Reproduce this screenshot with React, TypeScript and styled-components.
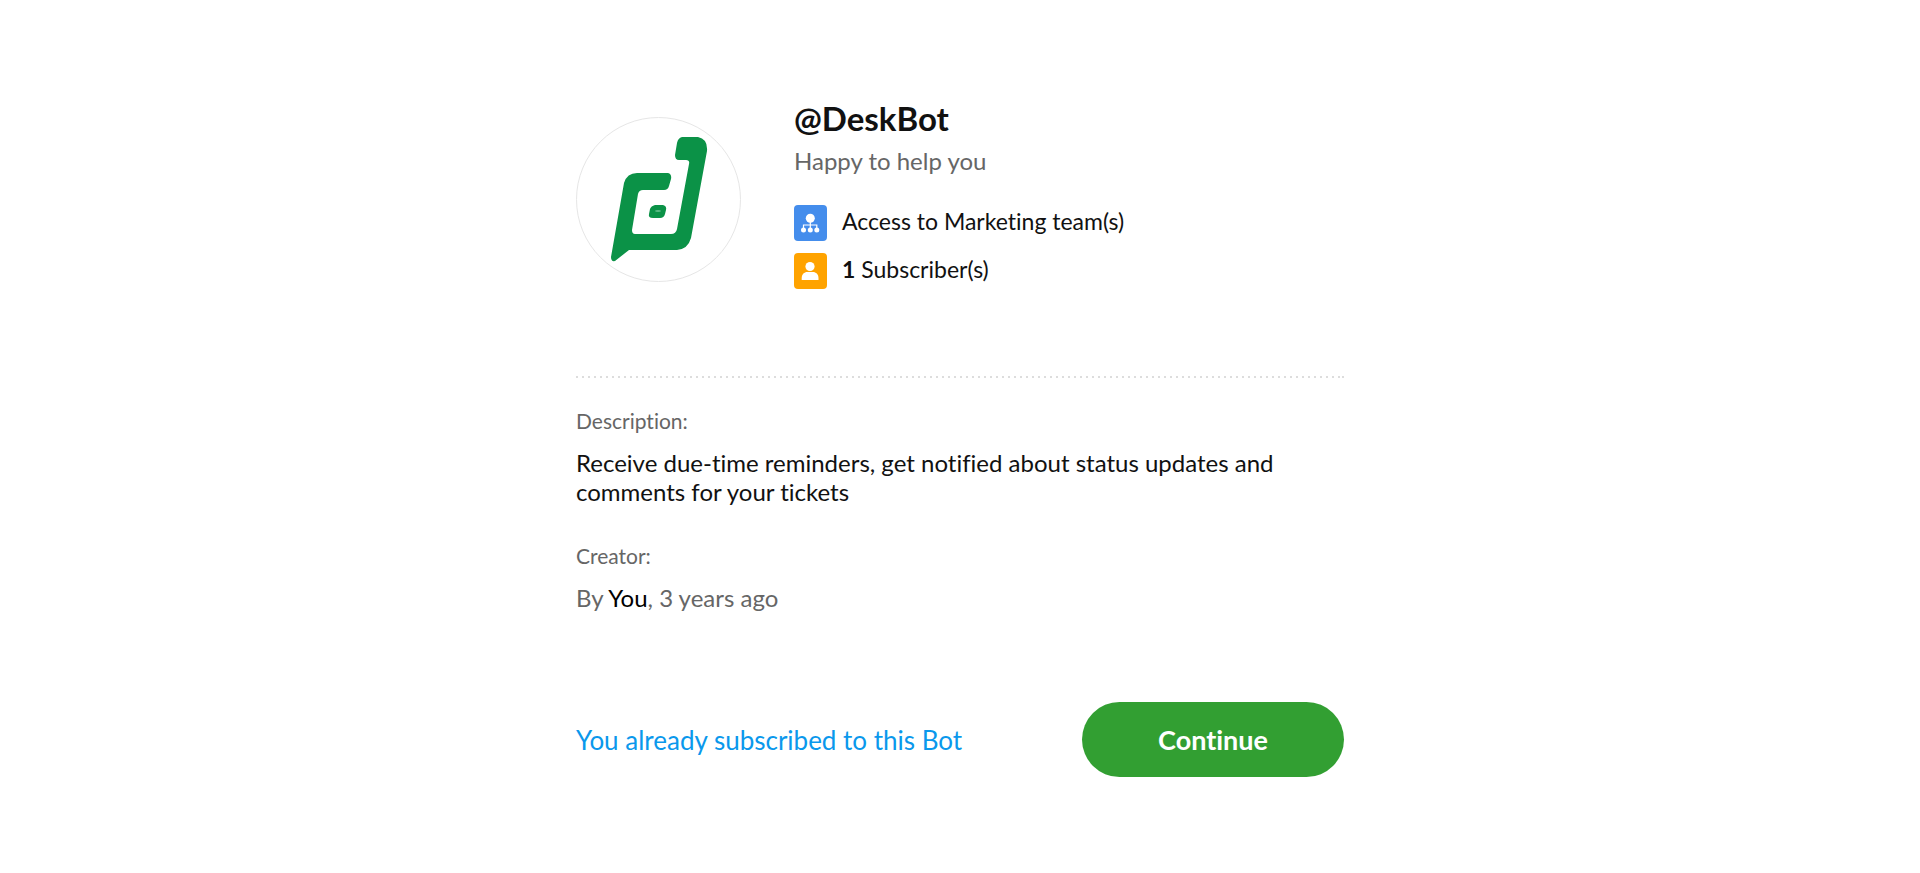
import React from "react";
import styled, { createGlobalStyle } from "styled-components";

const GlobalStyle = createGlobalStyle`
  *, *::before, *::after { box-sizing: border-box; }
  body {
    margin: 0;
    background: #fff;
    color: #111;
    font-family: Lato, "Liberation Sans", sans-serif;
    font-size: 24px;
    line-height: 29px;
    font-variant-ligatures: no-common-ligatures;
  }
  h1, h2, p, ul { margin: 0; padding: 0; }
`;

const Page = styled.main`
  display: flex;
  justify-content: center;
  padding: 99px 24px 96px;
`;

const Card = styled.article`
  width: 100%;
  max-width: 768px;
`;

const Header = styled.header`
  display: flex;
  align-items: center;
  gap: 53px;
  padding-bottom: 87px;
`;

const Avatar = styled.div`
  flex: none;
  width: 165px;
  height: 165px;
  margin-top: 10px;
  border: 1px solid #e6e6e6;
  border-radius: 50%;
  overflow: hidden;

  svg { display: block; width: 100%; height: 100%; }
`;

const Name = styled.h1`
  font-size: 33px;
  line-height: 38px;
  font-weight: 700;
`;

const Tagline = styled.p`
  margin-top: 9px;
  color: #666;
`;

const Facts = styled.ul`
  display: grid;
  gap: 12px;
  margin-top: 30px;
  list-style: none;
`;

const Fact = styled.li`
  display: flex;
  align-items: flex-start;
  gap: 15px;
  height: 36px;
  font-size: 23px;
  line-height: 32px;
`;

const FactIcon = styled.span<{ $color: string }>`
  flex: none;
  width: 33px;
  height: 36px;
  border-radius: 4px;
  background: ${(p) => p.$color};

  svg { display: block; }
`;

const Divider = styled.hr`
  height: 2px;
  margin: 0 0 29px;
  border: 0;
  background:
    linear-gradient(#ddd, #ddd) right / 2px 100% no-repeat,
    repeating-linear-gradient(to right, #ddd 0 2px, transparent 2px 6px);
`;

const Section = styled.section`
  margin-bottom: 36px;
`;

const Label = styled.h2`
  margin-bottom: 13px;
  color: #666;
  font-size: 21px;
  line-height: 28px;
  font-weight: 400;
`;

const Byline = styled.p`
  color: #666;

  span { color: #000; }
`;

const Footer = styled.footer`
  display: flex;
  flex-wrap: wrap;
  align-items: center;
  justify-content: space-between;
  gap: 24px;
  padding-top: 54px;
`;

const Status = styled.p`
  color: #0a98ec;
  font-size: 26px;
  line-height: 32px;
`;

const ContinueButton = styled.button`
  height: 75px;
  padding: 0 76px;
  border: 0;
  border-radius: 38px;
  background: #329f32;
  color: #fff;
  font-family: inherit;
  font-size: 27px;
  font-weight: 700;
  line-height: 32px;
  font-variant-ligatures: inherit;
  cursor: pointer;
`;

const DeskLogo = () => (
  <svg viewBox="7 8 163 163" aria-hidden="true">
    <g fill="#0b9247">
      <path d="M112 27H128Q138 29 137 41L121 128Q118 139 107 140H59L45 151Q41 152 41 147L54 73Q57 63 67 63H98Q102 64 101 69L99 76Q98 80 94 80H73Q69 80 68 84L62 120Q62 124 65 124H101Q106 124 107 119L119 54Q120 50 116 50H109Q105 50 105 45L107 33Q108 28 112 27Z" />
      <path d="M85 95H93Q97 96 96 100L95 104Q94 108 90 108H83Q78 108 79 104L80 99Q81 96 85 95Z" />
    </g>
    <ellipse cx="88" cy="101" rx="3" ry="1" fill="#5cba85" />
  </svg>
);

const TeamIcon = () => (
  <svg width="33" height="36" viewBox="0 0 33 36" aria-hidden="true">
    <g fill="#fff">
      <circle cx="16.3" cy="13.3" r="4.5" />
      <circle cx="9.5" cy="25" r="2.5" />
      <circle cx="16.3" cy="25" r="2.5" />
      <circle cx="22.8" cy="25" r="2.5" />
    </g>
    <path d="M16.3 17V24M9.5 24V20H22.8V24" fill="none" stroke="#fff" strokeWidth="1.2" />
  </svg>
);

const PersonIcon = () => (
  <svg width="33" height="36" viewBox="0 0 33 36" aria-hidden="true">
    <g fill="#fff">
      <circle cx="16" cy="13.5" r="4.6" />
      <path d="M7.7 27V25C7.7 21.2 10.3 19 13.2 19H19C21.9 19 24.5 21.2 24.5 25V27Z" />
    </g>
  </svg>
);

export default function App() {
  return (
    <>
      <GlobalStyle />
      <Page>
        <Card>
          <Header>
            <Avatar><DeskLogo /></Avatar>
            <div>
              <Name>@DeskBot</Name>
              <Tagline>Happy to help you</Tagline>
              <Facts>
                <Fact>
                  <FactIcon $color="#448dec"><TeamIcon /></FactIcon>
                  <span>Access to Marketing team(s)</span>
                </Fact>
                <Fact>
                  <FactIcon $color="#ffa300"><PersonIcon /></FactIcon>
                  <span><strong>1</strong> Subscriber(s)</span>
                </Fact>
              </Facts>
            </div>
          </Header>
          <Divider />
          <Section>
            <Label>Description:</Label>
            <p>Receive due-time reminders, get notified about status updates and comments for your tickets</p>
          </Section>
          <Section>
            <Label>Creator:</Label>
            <Byline>By <span>You</span>, 3 years ago</Byline>
          </Section>
          <Footer>
            <Status>You already subscribed to this Bot</Status>
            <ContinueButton type="button">Continue</ContinueButton>
          </Footer>
        </Card>
      </Page>
    </>
  );
}
